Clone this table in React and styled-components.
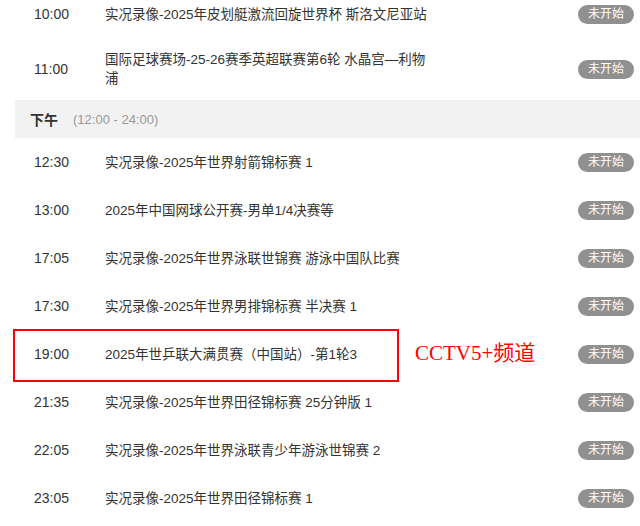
import styled, { createGlobalStyle } from "styled-components";

const GlobalStyle = createGlobalStyle`
  body {
    margin: 0;
    background: #fff;
    font-family: "Liberation Sans", "Noto Sans CJK SC", sans-serif;
  }
`;

const Schedule = styled.div`
  width: 640px;
  margin-top: -10px;
`;

const Row = styled.div`
  position: relative;
  display: flex;
  align-items: center;
  min-height: 48px;
  padding: 12px 6px 12px 34px;
  box-sizing: border-box;
  color: #333;
  font-size: 14px;
  line-height: 19px;
`;

const Time = styled.div`
  width: 71px;
  flex-shrink: 0;
`;

const Title = styled.div`
  width: 325px;
  font-size: 13.5px;
`;

const Status = styled.span`
  margin-left: auto;
  width: 56px;
  height: 19px;
  border-radius: 10px;
  background: #909090;
  color: #fff;
  font-size: 12px;
  line-height: 19px;
  text-align: center;
`;

const Period = styled.div`
  display: flex;
  align-items: center;
  gap: 15px;
  height: 38px;
  margin-left: 15px;
  padding-left: 15px;
  background: #f2f2f2;
`;

const PeriodName = styled.span`
  font-size: 14px;
  font-weight: bold;
  color: #333;
`;

const PeriodRange = styled.span`
  font-size: 13px;
  color: #999;
`;

const Highlight = styled.div`
  position: absolute;
  top: -1px;
  left: 13px;
  width: 386px;
  height: 53px;
  border: 2px solid #f00;
  box-sizing: border-box;
  pointer-events: none;
`;

const Note = styled.span`
  position: absolute;
  left: 415px;
  top: 10px;
  color: #f00;
  font-family: "Liberation Serif", "Noto Sans CJK SC", serif;
  font-size: 21px;
  line-height: 26px;
`;

const morning = [
  { time: "10:00", title: "实况录像-2025年皮划艇激流回旋世界杯 斯洛文尼亚站" },
  { time: "11:00", title: "国际足球赛场-25-26赛季英超联赛第6轮 水晶宫—利物浦" },
];

const afternoon = [
  { time: "12:30", title: "实况录像-2025年世界射箭锦标赛 1" },
  { time: "13:00", title: "2025年中国网球公开赛-男单1/4决赛等" },
  { time: "17:05", title: "实况录像-2025年世界泳联世锦赛 游泳中国队比赛" },
  { time: "17:30", title: "实况录像-2025年世界男排锦标赛 半决赛 1" },
  { time: "19:00", title: "2025年世乒联大满贯赛（中国站）-第1轮3", note: "CCTV5+频道" },
  { time: "21:35", title: "实况录像-2025年世界田径锦标赛 25分钟版 1" },
  { time: "22:05", title: "实况录像-2025年世界泳联青少年游泳世锦赛 2" },
  { time: "23:05", title: "实况录像-2025年世界田径锦标赛 1" },
];

function Program({ item }) {
  return (
    <Row>
      <Time>{item.time}</Time>
      <Title>{item.title}</Title>
      <Status>未开始</Status>
      {item.note && (
        <>
          <Highlight />
          <Note>{item.note}</Note>
        </>
      )}
    </Row>
  );
}

export default function App() {
  return (
    <>
      <GlobalStyle />
      <Schedule>
        {morning.map((item) => (
          <Program key={item.time} item={item} />
        ))}
        <Period>
          <PeriodName>下午</PeriodName>
          <PeriodRange>(12:00 - 24:00)</PeriodRange>
        </Period>
        {afternoon.map((item) => (
          <Program key={item.time} item={item} />
        ))}
      </Schedule>
    </>
  );
}
